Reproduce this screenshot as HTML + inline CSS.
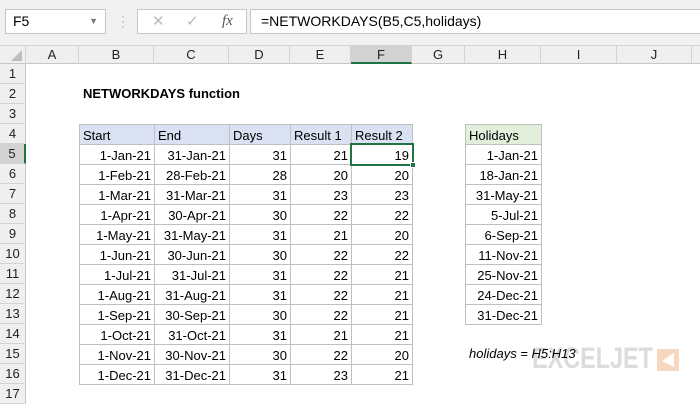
<!DOCTYPE html>
<html><head><style>
*{margin:0;padding:0;box-sizing:border-box}
body{width:700px;height:400px;overflow:hidden;background:#fff;font-family:"Liberation Sans",Calibri,sans-serif;font-size:13px;color:#000;position:relative}
.top{position:absolute;left:0;top:0;width:700px;height:46px;background:#f1f1f1;border-bottom:1px solid #d4d4d4}
.box{position:absolute;background:#fff;border:1px solid #c6c6c6;height:25px;top:9px;line-height:23px;font-size:14px}
.ch{position:absolute;top:46px;height:18px;background:#efefef;border-right:1px solid #d4d4d4;border-bottom:1px solid #c8c8c8;text-align:center;line-height:18px;color:#222}
.rh{position:absolute;left:0;width:26px;height:20px;background:#efefef;border-bottom:1px solid #d4d4d4;border-right:1px solid #c8c8c8;text-align:center;line-height:20px;color:#222}
.c{position:absolute;height:21px;line-height:21px;border:1px solid #bfbfbf;padding:0 3px;text-align:right;font-size:13px}
.h{text-align:left;background:#d9e1f2}
</style></head><body>
<div class="top"></div>
<div class="box" style="left:5px;width:101px;padding-left:7px">F5<span style="position:absolute;right:7px;top:0;font-size:9px;color:#777">▼</span></div>
<div style="position:absolute;left:121px;top:14px;color:#aaa;font-size:12px;line-height:5px">·<br>·<br>·</div>
<div class="box" style="left:137px;width:110px;color:#bbb;font-size:15px"><span style="position:absolute;left:14px">✕</span><span style="position:absolute;left:48px">✓</span><span style="position:absolute;left:84px;color:#555;font-style:italic;font-family:'Liberation Serif',serif">fx</span></div>
<div class="box" style="left:250px;width:460px;padding-left:10px">=NETWORKDAYS(B5,C5,holidays)</div>
<div class="ch" style="left:0;width:26px;background:#efefef"><svg width="26" height="18"><polygon points="22,4 22,15 11,15" fill="#bdbdbd"/></svg></div>
<div class="ch" style="left:26px;width:53px">A</div>
<div class="ch" style="left:79px;width:75px">B</div>
<div class="ch" style="left:154px;width:75px">C</div>
<div class="ch" style="left:229px;width:61px">D</div>
<div class="ch" style="left:290px;width:61px">E</div>
<div class="ch" style="left:351px;width:61px;background:#d2d2d2;border-bottom:2px solid #217346">F</div>
<div class="ch" style="left:412px;width:53px">G</div>
<div class="ch" style="left:465px;width:76px">H</div>
<div class="ch" style="left:541px;width:76px">I</div>
<div class="ch" style="left:617px;width:75px">J</div>
<div class="ch" style="left:692px;width:10px"></div>
<div class="rh" style="top:64px">1</div><div class="rh" style="top:84px">2</div><div class="rh" style="top:104px">3</div><div class="rh" style="top:124px">4</div>
<div class="rh" style="top:144px;background:#d2d2d2;border-right:2px solid #217346">5</div>
<div class="rh" style="top:164px">6</div><div class="rh" style="top:184px">7</div><div class="rh" style="top:204px">8</div><div class="rh" style="top:224px">9</div><div class="rh" style="top:244px">10</div><div class="rh" style="top:264px">11</div><div class="rh" style="top:284px">12</div><div class="rh" style="top:304px">13</div><div class="rh" style="top:324px">14</div><div class="rh" style="top:344px">15</div><div class="rh" style="top:364px">16</div><div class="rh" style="top:384px">17</div>
<div style="position:absolute;left:83px;top:86px;font-weight:bold;font-size:13px">NETWORKDAYS function</div>

<div style="position:absolute;left:532px;top:342px;font-size:30px;font-weight:bold;color:#dcdcdc;transform:scaleX(0.78);transform-origin:left top;font-family:'Liberation Sans',sans-serif">EXCELJET</div>
<div style="position:absolute;left:657px;top:349px;width:22px;height:22px;background:#f8d7bf"><svg width="22" height="22"><polygon points="17,4 17,18 5,12" fill="#fff"/></svg></div>

<div class="c h" style="left:79px;top:124px;width:76px">Start</div><div class="c h" style="left:154px;top:124px;width:76px">End</div><div class="c h" style="left:229px;top:124px;width:62px">Days</div><div class="c h" style="left:290px;top:124px;width:62px">Result 1</div><div class="c h" style="left:351px;top:124px;width:62px">Result 2</div>

<div class="c" style="left:79px;top:144px;width:76px">1-Jan-21</div><div class="c" style="left:154px;top:144px;width:76px">31-Jan-21</div><div class="c" style="left:229px;top:144px;width:62px">31</div><div class="c" style="left:290px;top:144px;width:62px">21</div><div class="c" style="left:351px;top:144px;width:62px">19</div>
<div class="c" style="left:79px;top:164px;width:76px">1-Feb-21</div><div class="c" style="left:154px;top:164px;width:76px">28-Feb-21</div><div class="c" style="left:229px;top:164px;width:62px">28</div><div class="c" style="left:290px;top:164px;width:62px">20</div><div class="c" style="left:351px;top:164px;width:62px">20</div>
<div class="c" style="left:79px;top:184px;width:76px">1-Mar-21</div><div class="c" style="left:154px;top:184px;width:76px">31-Mar-21</div><div class="c" style="left:229px;top:184px;width:62px">31</div><div class="c" style="left:290px;top:184px;width:62px">23</div><div class="c" style="left:351px;top:184px;width:62px">23</div>
<div class="c" style="left:79px;top:204px;width:76px">1-Apr-21</div><div class="c" style="left:154px;top:204px;width:76px">30-Apr-21</div><div class="c" style="left:229px;top:204px;width:62px">30</div><div class="c" style="left:290px;top:204px;width:62px">22</div><div class="c" style="left:351px;top:204px;width:62px">22</div>
<div class="c" style="left:79px;top:224px;width:76px">1-May-21</div><div class="c" style="left:154px;top:224px;width:76px">31-May-21</div><div class="c" style="left:229px;top:224px;width:62px">31</div><div class="c" style="left:290px;top:224px;width:62px">21</div><div class="c" style="left:351px;top:224px;width:62px">20</div>
<div class="c" style="left:79px;top:244px;width:76px">1-Jun-21</div><div class="c" style="left:154px;top:244px;width:76px">30-Jun-21</div><div class="c" style="left:229px;top:244px;width:62px">30</div><div class="c" style="left:290px;top:244px;width:62px">22</div><div class="c" style="left:351px;top:244px;width:62px">22</div>
<div class="c" style="left:79px;top:264px;width:76px">1-Jul-21</div><div class="c" style="left:154px;top:264px;width:76px">31-Jul-21</div><div class="c" style="left:229px;top:264px;width:62px">31</div><div class="c" style="left:290px;top:264px;width:62px">22</div><div class="c" style="left:351px;top:264px;width:62px">21</div>
<div class="c" style="left:79px;top:284px;width:76px">1-Aug-21</div><div class="c" style="left:154px;top:284px;width:76px">31-Aug-21</div><div class="c" style="left:229px;top:284px;width:62px">31</div><div class="c" style="left:290px;top:284px;width:62px">22</div><div class="c" style="left:351px;top:284px;width:62px">21</div>
<div class="c" style="left:79px;top:304px;width:76px">1-Sep-21</div><div class="c" style="left:154px;top:304px;width:76px">30-Sep-21</div><div class="c" style="left:229px;top:304px;width:62px">30</div><div class="c" style="left:290px;top:304px;width:62px">22</div><div class="c" style="left:351px;top:304px;width:62px">21</div>
<div class="c" style="left:79px;top:324px;width:76px">1-Oct-21</div><div class="c" style="left:154px;top:324px;width:76px">31-Oct-21</div><div class="c" style="left:229px;top:324px;width:62px">31</div><div class="c" style="left:290px;top:324px;width:62px">21</div><div class="c" style="left:351px;top:324px;width:62px">21</div>
<div class="c" style="left:79px;top:344px;width:76px">1-Nov-21</div><div class="c" style="left:154px;top:344px;width:76px">30-Nov-21</div><div class="c" style="left:229px;top:344px;width:62px">30</div><div class="c" style="left:290px;top:344px;width:62px">22</div><div class="c" style="left:351px;top:344px;width:62px">20</div>
<div class="c" style="left:79px;top:364px;width:76px">1-Dec-21</div><div class="c" style="left:154px;top:364px;width:76px">31-Dec-21</div><div class="c" style="left:229px;top:364px;width:62px">31</div><div class="c" style="left:290px;top:364px;width:62px">23</div><div class="c" style="left:351px;top:364px;width:62px">21</div>
<div style="position:absolute;left:350px;top:143px;width:64px;height:23px;border:2px solid #217346"></div>
<div style="position:absolute;left:410px;top:162px;width:6px;height:6px;background:#217346;border:1px solid #fff"></div>

<div class="c" style="left:465px;top:124px;width:77px;text-align:left;background:#e2efda">Holidays</div>
<div class="c" style="left:465px;top:144px;width:77px">1-Jan-21</div>
<div class="c" style="left:465px;top:164px;width:77px">18-Jan-21</div>
<div class="c" style="left:465px;top:184px;width:77px">31-May-21</div>
<div class="c" style="left:465px;top:204px;width:77px">5-Jul-21</div>
<div class="c" style="left:465px;top:224px;width:77px">6-Sep-21</div>
<div class="c" style="left:465px;top:244px;width:77px">11-Nov-21</div>
<div class="c" style="left:465px;top:264px;width:77px">25-Nov-21</div>
<div class="c" style="left:465px;top:284px;width:77px">24-Dec-21</div>
<div class="c" style="left:465px;top:304px;width:77px">31-Dec-21</div>

<div style="position:absolute;left:469px;top:346px;font-style:italic;font-size:13px">holidays = H5:H13</div>
</body></html>
